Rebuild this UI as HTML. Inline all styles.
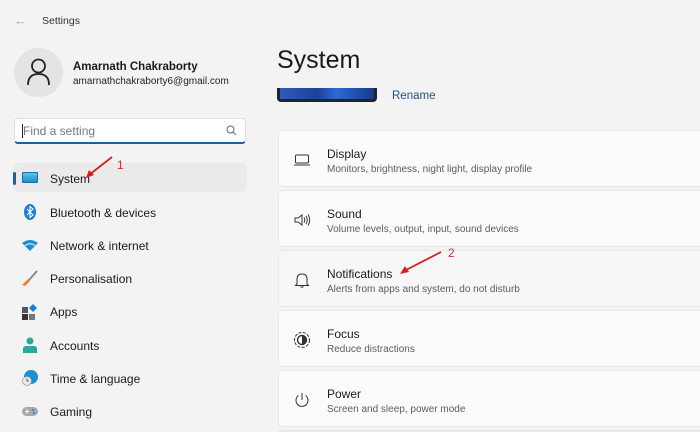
<!DOCTYPE html>
<html style="width:700px;height:432px;overflow:hidden"><head><meta charset="utf-8"><style>
*{margin:0;padding:0;box-sizing:border-box}
body{width:700px;height:432px;overflow:hidden;background:#f3f3f3;font-family:"Liberation Sans",sans-serif;color:#1a1a1a;position:relative}
.a{position:absolute}
.nav{position:absolute;left:50px;font-size:12px;color:#1b1b1b}
.ic{position:absolute;left:22px;width:16px;height:16px}
.card{position:absolute;left:278px;width:430px;height:57px;background:#fbfbfb;border:1px solid #e8e8e8;border-radius:5px}
.card .t{position:absolute;left:48px;top:16px;font-size:12px;color:#1b1b1b}
.card .s{position:absolute;left:48px;top:33px;font-size:10px;color:#5d5d5d}
.card svg{position:absolute;left:14px;top:20px}
</style></head><body>
<div class="a" style="left:14px;top:13px;font-size:13px;color:#aaa">←</div>
<div class="a" style="left:42px;top:15px;font-size:10.5px;color:#333">Settings</div>
<div class="a" style="left:14px;top:48px;width:49px;height:49px;border-radius:50%;background:#e4e4e4"></div>
<svg class="a" style="left:26px;top:58px" width="25" height="28" viewBox="0 0 25 28"><circle cx="12.5" cy="8" r="6.5" fill="none" stroke="#222" stroke-width="1.8"/><path d="M2 27 Q2 16 12.5 16 Q23 16 23 27" fill="none" stroke="#222" stroke-width="1.8"/></svg>
<div class="a" style="left:73px;top:61px;font-size:11.5px;font-weight:bold;color:#1a1a1a">Amarnath Chakraborty</div>
<div class="a" style="left:73px;top:76px;font-size:10px;color:#222">amarnathchakraborty6@gmail.com</div>
<div class="a" style="left:14px;top:118px;width:232px;height:26px;background:#fff;border:1px solid #e0e0e0;border-bottom:2px solid #1f5f9f;border-radius:4px"></div>
<div class="a" style="left:22px;top:124px;width:1px;height:14px;background:#222"></div>
<div class="a" style="left:23px;top:124px;font-size:12px;color:#777">Find a setting</div>
<svg class="a" style="left:226px;top:125px" width="11" height="11" viewBox="0 0 11 11"><circle cx="4.5" cy="4.5" r="3.5" fill="none" stroke="#666" stroke-width="1"/><path d="M7 7L10 10" stroke="#666"/></svg>
<div class="a" style="left:13px;top:163px;width:234px;height:29px;background:#eaeaea;border-radius:5px"></div>
<div class="a" style="left:13px;top:172px;width:3px;height:13px;background:#1f5f9f;border-radius:2px"></div>
<div class="a" style="left:22px;top:172px;width:16px;height:11px;background:linear-gradient(#5fc4e8,#1a8fc7);border:1px solid #1e6f9e;border-radius:1px"></div>
<div class="nav" style="top:172px">System</div>
<svg class="a" style="left:84px;top:154px" width="32" height="26"><path d="M28 3L5 21" stroke="#d42020" stroke-width="1.8"/><path d="M2 24L5 16L10 21Z" fill="#d42020"/></svg>
<div class="a" style="left:117px;top:158px;font-size:12px;color:#c33">1</div>
<svg class="ic" style="top:204px" viewBox="0 0 16 16"><ellipse cx="8" cy="8" rx="6" ry="8" fill="#1a7fd4"/><path d="M5 5L11 11L8 13.5V2.5L11 5L5 11" stroke="#fff" fill="none" stroke-width="1.1"/></svg>
<div class="nav" style="top:206px">Bluetooth &amp; devices</div>
<svg class="ic" style="top:238px" viewBox="0 0 16 16"><path d="M0 5Q8 -1 16 5L8 13Z" fill="#1a8fd4"/><path d="M3 7.5Q8 4 13 7.5" stroke="#fff" fill="none"/></svg>
<div class="nav" style="top:239px">Network &amp; internet</div>
<svg class="ic" style="top:270px" viewBox="0 0 16 16"><path d="M15 1L7 10" stroke="#888" stroke-width="2"/><path d="M6 9L8 11L3 16L0 15Z" fill="#f08030"/></svg>
<div class="nav" style="top:272px">Personalisation</div>
<svg class="ic" style="top:304px" viewBox="0 0 16 16"><rect x="0" y="3" width="6" height="6" fill="#555"/><rect x="0" y="10" width="6" height="6" fill="#333"/><rect x="7" y="10" width="6" height="6" fill="#777"/><path d="M11 0L15 4L11 8L7 4Z" fill="#1a7fd4"/></svg>
<div class="nav" style="top:305px">Apps</div>
<svg class="ic" style="top:337px" viewBox="0 0 16 16"><circle cx="8" cy="4" r="3.5" fill="#2aa89a"/><path d="M1 16V12Q1 9 4 9H12Q15 9 15 12V16Z" fill="#2aa89a"/></svg>
<div class="nav" style="top:339px">Accounts</div>
<svg class="ic" style="top:370px" viewBox="0 0 16 16"><circle cx="9" cy="7" r="7" fill="#1a8fd4"/><circle cx="5" cy="11" r="4.5" fill="#e8e8e8" stroke="#888" stroke-width=".6"/><path d="M5 8.5V11H7" stroke="#444" fill="none" stroke-width=".8"/></svg>
<div class="nav" style="top:372px">Time &amp; language</div>
<svg class="ic" style="top:404px" viewBox="0 0 16 16"><rect x="0" y="3" width="16" height="9" rx="4.5" fill="#a9a9a9"/><path d="M3 7.5H7M5 5.5V9.5" stroke="#fff"/><circle cx="11" cy="6" r="1" fill="#1a7fd4"/><circle cx="12" cy="9" r="1" fill="#1a7fd4"/></svg>
<div class="nav" style="top:405px">Gaming</div>

<div class="a" style="left:277px;top:46px;font-size:25px;color:#1a1a1a">System</div>
<div class="a" style="left:277px;top:88px;width:100px;height:14px;background:#1e2330;border-radius:0 0 4px 4px;overflow:hidden"><div style="position:absolute;left:3px;top:0;width:94px;height:11px;background:linear-gradient(90deg,#2d5db8,#1f3f9a 40%,#2b6ad4 60%,#183a88)"></div></div>
<div class="a" style="left:392px;top:90px;font-size:11.5px;color:#1f4f86">Rename</div>

<div class="card" style="top:130px"><svg width="18" height="18" viewBox="0 0 18 18"><rect x="2.5" y="4" width="13" height="8" rx="1" fill="none" stroke="#333"/><path d="M1 14H17" stroke="#333"/></svg><div class="t">Display</div><div class="s">Monitors, brightness, night light, display profile</div></div>
<div class="card" style="top:190px"><svg width="18" height="18" viewBox="0 0 18 18"><path d="M2 7H5L9 4V14L5 11H2Z" fill="none" stroke="#333"/><path d="M11 6.5Q12.5 9 11 11.5M13 5Q15.5 9 13 13M15 3.5Q18.5 9 15 14.5" fill="none" stroke="#333"/></svg><div class="t">Sound</div><div class="s">Volume levels, output, input, sound devices</div></div>
<div class="card" style="top:250px;background:#f7f7f7"><svg width="18" height="18" viewBox="0 0 18 18"><path d="M4 13V8Q4 3 9 3Q14 3 14 8V13L15.5 14.5H2.5Z" fill="none" stroke="#333"/><path d="M7.5 15.5Q9 17 10.5 15.5" fill="none" stroke="#333"/></svg><div class="t">Notifications</div><div class="s">Alerts from apps and system, do not disturb</div></div>
<svg class="a" style="left:398px;top:250px" width="46" height="26"><path d="M43 2L8 20" stroke="#d42020" stroke-width="1.8"/><path d="M2 24L7 16L11 22Z" fill="#d42020"/></svg>
<div class="a" style="left:448px;top:246px;font-size:12px;color:#c33">2</div>
<div class="card" style="top:310px"><svg width="18" height="18" viewBox="0 0 18 18"><circle cx="9" cy="9" r="7.5" fill="none" stroke="#333" stroke-dasharray="3 1.5"/><circle cx="9" cy="9" r="4.5" fill="none" stroke="#333" stroke-width="1.4"/><path d="M9 4.5A4.5 4.5 0 0 1 9 13.5Z" fill="#333"/></svg><div class="t">Focus</div><div class="s">Reduce distractions</div></div>
<div class="card" style="top:370px"><svg width="18" height="18" viewBox="0 0 18 18"><path d="M9 2V9" stroke="#333"/><path d="M5.5 4.5A6 6 0 1 0 12.5 4.5" fill="none" stroke="#333"/></svg><div class="t">Power</div><div class="s">Screen and sleep, power mode</div></div>
<div class="card" style="top:430px;height:2px"></div>
</body></html>
